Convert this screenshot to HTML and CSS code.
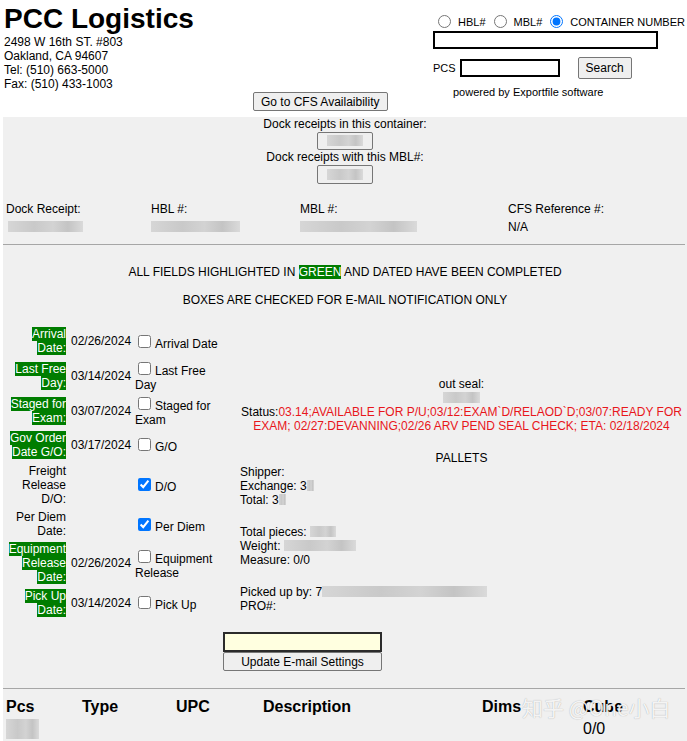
FILE: index.html
```html
<!DOCTYPE html>
<html lang="en">
<head>
  <meta charset="UTF-8">
  <title>PCC Logistics - Container Status</title>
  <link rel="stylesheet" href="styles.css">
</head>
<body>
  <div class="top">
    <div class="company">
      <h1>PCC Logistics</h1>
      <div class="address">
        2498 W 16th ST. #803<br>
        Oakland, CA 94607<br>
        Tel: (510) 663-5000<br>
        Fax: (510) 433-1003
      </div>
      <button class="btn cfs-btn" type="button">Go to CFS Availaibility</button>
    </div>

    <form class="search">
      <div class="search-type">
        <input type="radio" name="type" id="typeHbl"><label for="typeHbl">HBL#</label>
        <input type="radio" name="type" id="typeMbl"><label for="typeMbl">MBL#</label>
        <input type="radio" name="type" id="typeCnt" checked><label for="typeCnt">CONTAINER NUMBER</label>
      </div>
      <input type="text" class="field number-field">
      <div class="pcs-row">
        <span>PCS</span>
        <input type="text" class="field pcs-field">
        <button class="btn search-btn" type="button">Search</button>
      </div>
      <div class="powered">powered by Exportfile software</div>
    </form>
  </div>

  <div class="panel">
    <div class="receipts">
      <div>Dock receipts in this container:</div>
      <button class="btn receipt-btn" type="button"><span class="blur blur-btn"></span></button>
      <div>Dock receipts with this MBL#:</div>
      <button class="btn receipt-btn receipt-btn-tall" type="button"><span class="blur blur-btn"></span></button>
    </div>

    <div class="refs">
      <div>Dock Receipt:</div>
      <div>HBL #:</div>
      <div>MBL #:</div>
      <div>CFS Reference #:</div>
      <div><span class="blur blur-dr"></span></div>
      <div><span class="blur blur-hbl"></span></div>
      <div><span class="blur blur-mbl"></span></div>
      <div>N/A</div>
    </div>

    <hr class="rule">

    <div class="notice">
      <p>ALL FIELDS HIGHLIGHTED IN <span class="done">GREEN</span> AND DATED HAVE BEEN COMPLETED</p>
      <p>BOXES ARE CHECKED FOR E-MAIL NOTIFICATION ONLY</p>
    </div>

    <div class="detail">
      <div class="milestones">
        <div class="ms-label"><span class="done">Arrival Date:</span></div>
        <div class="ms-date">02/26/2024</div>
        <div class="ms-check"><input type="checkbox">Arrival Date</div>

        <div class="ms-label"><span class="done">Last Free Day:</span></div>
        <div class="ms-date">03/14/2024</div>
        <div class="ms-check"><input type="checkbox">Last Free Day</div>

        <div class="ms-label"><span class="done">Staged for Exam:</span></div>
        <div class="ms-date">03/07/2024</div>
        <div class="ms-check"><input type="checkbox">Staged for Exam</div>

        <div class="ms-label"><span class="done">Gov Order Date G/O:</span></div>
        <div class="ms-date">03/17/2024</div>
        <div class="ms-check"><input type="checkbox">G/O</div>

        <div class="ms-label">Freight Release D/O:</div>
        <div class="ms-date"></div>
        <div class="ms-check"><input type="checkbox" checked>D/O</div>

        <div class="ms-label">Per Diem Date:</div>
        <div class="ms-date"></div>
        <div class="ms-check"><input type="checkbox" checked>Per Diem</div>

        <div class="ms-label"><span class="done">Equipment Release Date:</span></div>
        <div class="ms-date">02/26/2024</div>
        <div class="ms-check"><input type="checkbox">Equipment Release</div>

        <div class="ms-label"><span class="done">Pick Up Date:</span></div>
        <div class="ms-date">03/14/2024</div>
        <div class="ms-check"><input type="checkbox">Pick Up</div>
      </div>

      <div class="info">
        <div class="centered">out seal:</div>
        <div class="centered"><span class="blur blur-seal"></span></div>
        <div class="centered">Status:<span class="status">03.14;AVAILABLE FOR P/U;03/12:EXAM`D/RELAOD`D;03/07:READY FOR EXAM; 02/27:DEVANNING;02/26 ARV PEND SEAL CHECK; ETA: 02/18/2024</span></div>

        <div class="centered group">PALLETS</div>
        <div>Shipper:</div>
        <div>Exchange: 3<span class="blur blur-num"></span></div>
        <div>Total: 3<span class="blur blur-num"></span></div>

        <div class="group">Total pieces: <span class="blur blur-pcs"></span></div>
        <div>Weight: <span class="blur blur-weight"></span></div>
        <div>Measure: 0/0</div>

        <div class="group">Picked up by: 7<span class="blur blur-pick"></span></div>
        <div>PRO#:</div>
      </div>
    </div>

    <div class="email">
      <input type="text" class="email-field">
      <button class="btn email-btn" type="button">Update E-mail Settings</button>
    </div>

    <hr class="rule">

    <div class="items">
      <div class="th">Pcs</div>
      <div class="th">Type</div>
      <div class="th">UPC</div>
      <div class="th">Description</div>
      <div class="th">Dims</div>
      <div class="th">Cube</div>
      <div><span class="blur blur-row"></span></div>
      <div></div>
      <div></div>
      <div></div>
      <div></div>
      <div class="cube">0/0</div>
    </div>
  </div>

  <div class="watermark">知乎 @One小白</div>
</body>
</html>
```

FILE: styles.css
```css
* {
  box-sizing: border-box;
}

body {
  margin: 0;
  position: relative;
  font-family: "Liberation Sans", Arial, sans-serif;
  font-size: 12px;
  line-height: 14px;
  color: #000;
  background-color: #fff;
}

/* header */
.top {
  display: flex;
}

.company {
  width: 433px;
  padding-left: 4px;
}

h1 {
  margin: 3px 0 0;
  font-size: 28px;
  line-height: 32px;
  font-weight: bold;
}

.btn {
  font-family: "Liberation Sans", Arial, sans-serif;
  font-size: 12px;
  line-height: 14px;
  color: #000;
  background-color: #efefef;
  border: 1px solid #767676;
  border-radius: 2px;
  padding: 0 6px;
}

.cfs-btn {
  display: block;
  height: 19px;
  margin: 1px 0 6px 249px;
  padding: 0 7px;
}

.search {
  padding-top: 12px;
  font-size: 11px;
}

.search-type {
  display: flex;
  align-items: center;
  height: 19px;
}

.search-type input {
  width: 13px;
  height: 13px;
  margin: 0 7px 0 8px;
}

.search-type input:first-child {
  margin-left: 5px;
}

.field {
  height: 18px;
  margin: 0;
  border: 2px solid #000;
  background-color: #fff;
}

.number-field {
  display: block;
  width: 225px;
}

.pcs-row {
  display: flex;
  align-items: center;
  height: 22px;
  margin-top: 8px;
}

.pcs-field {
  width: 100px;
  margin-left: 4px;
}

.search-btn {
  height: 22px;
  width: 54px;
  margin-left: 18px;
  padding: 0;
}

.powered {
  margin: 6px 0 0 20px;
}

/* grey body of the page */
.panel {
  margin-left: 3px;
  padding-bottom: 10px;
  background-color: #f0f0f0;
}

.receipts {
  text-align: center;
}

.receipt-btn {
  display: block;
  width: 56px;
  height: 18px;
  margin: 1px auto 0;
  padding: 0;
}

.receipt-btn-tall {
  height: 19px;
}

.refs {
  display: grid;
  grid-template-columns: 145px 149px 208px 1fr;
  row-gap: 4px;
  padding: 18px 0 10px 3px;
}

.rule {
  margin: 0 2px 0 0;
  border: 0;
  border-top: 1px solid #a6a6a6;
}

.notice {
  padding-top: 20px;
  text-align: center;
}

.notice p {
  margin: 0;
}

.notice p + p {
  margin-top: 14px;
}

.done {
  background-color: #007d00;
  color: #fff;
}

.detail {
  display: flex;
  margin-top: 17px;
}

.milestones {
  display: grid;
  grid-template-columns: 63px 69px 90px;
  grid-template-rows: 34px 35px 35px 33px 47px 32px 46px 33px;
  align-items: center;
}

.ms-label {
  text-align: right;
}

.ms-date {
  padding-left: 5px;
}

.ms-check input {
  width: 13px;
  height: 13px;
  margin: 3px 4px 3px 3px;
}

.info {
  width: 443px;
  margin-left: 15px;
  padding-top: 53px;
}

.centered {
  text-align: center;
}

.status {
  color: #e8161b;
}

.group {
  margin-top: 18px;
}

.email {
  width: 159px;
  margin: 13px 0 17px 220px;
}

.email-field {
  display: block;
  width: 159px;
  height: 20px;
  margin: 0;
  border: 2px solid #2b2b2b;
  background-color: #ffffe0;
}

.email-btn {
  display: block;
  width: 159px;
  height: 19px;
  padding: 0;
}

.items {
  display: grid;
  grid-template-columns: 76px 94px 87px 219px 101px 1fr;
  row-gap: 3px;
  padding: 9px 0 0 3px;
  font-size: 16px;
  line-height: 18px;
}

.th {
  font-weight: bold;
}

.cube {
  padding-top: 1px;
}

/* redacted values */
.blur {
  display: inline-block;
  height: 11px;
  vertical-align: -1px;
  background: linear-gradient(90deg, #d6d6d6, #c9c9c9 35%, #d3d3d3 60%, #c4c4c4 80%, #dadada);
  filter: blur(0.6px);
}

.blur-btn { width: 36px; }
.blur-dr { width: 75px; margin-left: 2px; }
.blur-hbl { width: 89px; }
.blur-mbl { width: 117px; }
.blur-seal { width: 37px; }
.blur-num { width: 7px; }
.blur-pcs { width: 26px; }
.blur-weight { width: 72px; }
.blur-pick { width: 165px; }
.blur-row { width: 33px; height: 20px; }

.watermark {
  position: absolute;
  left: 522px;
  top: 695px;
  font-family: "Noto Sans CJK SC", "Liberation Sans", sans-serif;
  font-size: 21px;
  line-height: 24px;
  color: rgba(255, 255, 255, 0.9);
  text-shadow: 0 0 1px rgba(0, 0, 0, 0.35);
}
```
